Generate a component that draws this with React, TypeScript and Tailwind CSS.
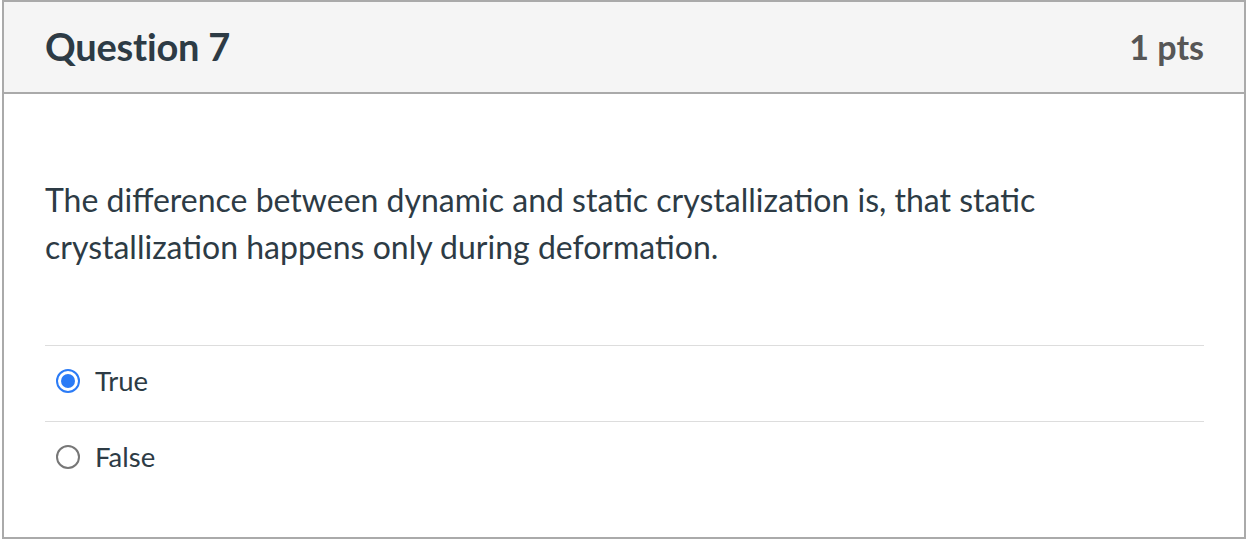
import { useState } from 'react';

const answers = ['True', 'False'];

export default function App() {
  const [picked, setPicked] = useState('True');

  return (
    <div className="w-[1250px] h-[544px] bg-white" style={{ fontFamily: 'Lato, "Open Sans", sans-serif' }}>
      <div className="ml-[2px] w-[1244px] h-[539px] border-2 border-[#aaaaaa] flex flex-col">
        {/* Header */}
        <div className="h-[92px] shrink-0 bg-[#f5f5f5] border-b-2 border-[#aaaaaa] flex items-center justify-between pl-[41px] pr-[40px] pb-[2px]">
          <h2 className="text-[38px] font-bold text-[#2d3b45] tracking-[-0.2px]">Question 7</h2>
          <span className="text-[34px] font-bold text-[#565656]">1 pts</span>
        </div>

        {/* Body */}
        <div className="pl-[41px] pr-[40px] pt-[82px]">
          <p className="text-[32px] leading-[47px] text-[#2d3b45] mb-[75px]">
            The difference between dynamic and static crystallization is, that static
            <br />
            crystallization happens only during deformation.
          </p>

          <div>
            {answers.map((a) => (
              <label
                key={a}
                className="flex items-center h-[76px] pb-[6px] cursor-pointer border-t border-[#dddddd]"
                onClick={() => setPicked(a)}
              >
                <span className="ml-[10px] mr-[15px] w-[25px] h-[25px] flex items-center justify-center">
                  {picked === a ? (
                    <span className="w-[24px] h-[24px] rounded-full border-[2.5px] border-[#2b7bf6] flex items-center justify-center">
                      <span className="w-[14px] h-[14px] rounded-full bg-[#2b7bf6]" />
                    </span>
                  ) : (
                    <span className="w-[24px] h-[24px] rounded-full border-2 border-[#777777]" />
                  )}
                </span>
                <span className="text-[27.5px] text-[#2d3b45]">{a}</span>
              </label>
            ))}
          </div>
        </div>
      </div>
    </div>
  );
}
